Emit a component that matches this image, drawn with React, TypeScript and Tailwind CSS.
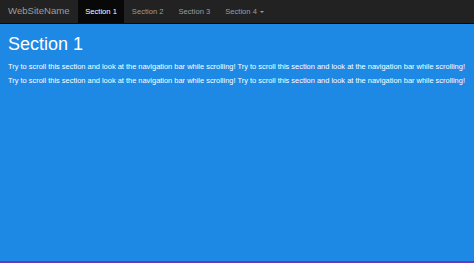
export default function App() {
  const links = ["Section 1", "Section 2", "Section 3"];
  const text = "Try to scroll this section and look at the navigation bar while scrolling!";
  return (
    <div className="w-full h-[263px] overflow-hidden font-['Liberation_Sans',Arial,sans-serif]">
      <nav className="h-[24px] bg-[#222222] border-b border-[#080808] flex items-stretch">
        <div className="pl-[8px] pr-[8px] flex items-center text-[9.6px] text-[#9d9d9d]">WebSiteName</div>
        <ul className="flex items-stretch">
          {links.map((l, i) => (
            <li
              key={l}
              className={`px-[7.5px] flex items-center text-[7.6px] ${
                i === 0 ? "bg-[#080808] text-white" : "text-[#9d9d9d]"
              }`}
            >
              {l}
            </li>
          ))}
          <li className="px-[7.5px] flex items-center gap-[3px] text-[7.6px] text-[#9d9d9d]">
            Section 4
            <span className="w-0 h-0 border-x-[2.5px] border-x-transparent border-t-[2.5px] border-t-[#9d9d9d]" />
          </li>
        </ul>
      </nav>
      <section className="h-[237px] bg-[#1e88e5] text-white px-[8px]">
        <h1 className="pt-[9px] text-[18px] leading-[22px] mb-[7px]">Section 1</h1>
        <p className="text-[7.45px] leading-[10px] mb-[4px] whitespace-nowrap">{text} {text}</p>
        <p className="text-[7.45px] leading-[10px] whitespace-nowrap">{text} {text}</p>
      </section>
      <section className="h-[300px] bg-[#673ab7]" />
    </div>
  );
}
